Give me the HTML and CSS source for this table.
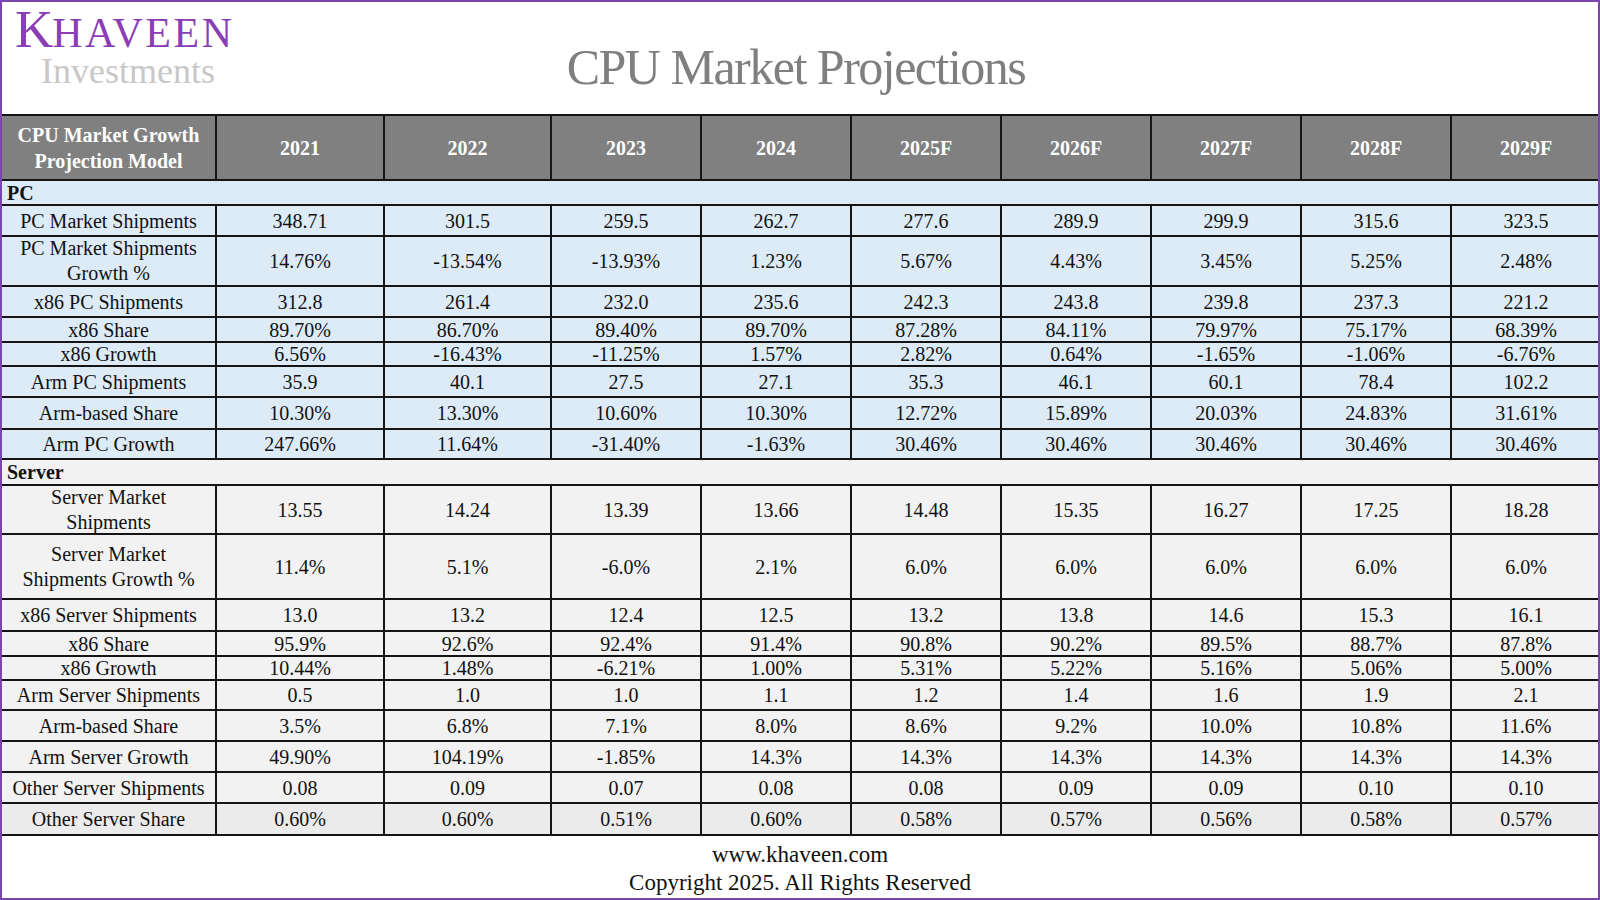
FILE: index.html
```html
<!DOCTYPE html>
<html lang="en">
<head>
<meta charset="utf-8">
<title>CPU Market Projections</title>
<link rel="stylesheet" href="styles.css">
</head>
<body>
<div class="page">
  <header class="top">
    <div class="logo">
      <div class="logo-name"><span class="logo-k">K</span>HAVEEN</div>
      <div class="logo-sub">Investments</div>
    </div>
    <h1 class="title">CPU Market Projections</h1>
    <div class="spacer"></div>
  </header>

  <table class="grid">
    <colgroup>
      <col class="c-label"><col class="c-168"><col class="c-167"><col class="c-150"><col class="c-150"><col class="c-150"><col class="c-150"><col class="c-150"><col class="c-150"><col class="c-150">
    </colgroup>
    <thead>
      <tr class="r65">
        <th class="head-label">CPU Market Growth<br>Projection Model</th>
        <th>2021</th><th>2022</th><th>2023</th><th>2024</th><th>2025F</th><th>2026F</th><th>2027F</th><th>2028F</th><th>2029F</th>
      </tr>
    </thead>
    <tbody class="pc">
      <tr class="r25 section"><td colspan="10">PC</td></tr>
      <tr class="r31"><td class="label">PC Market Shipments</td><td>348.71</td><td>301.5</td><td>259.5</td><td>262.7</td><td>277.6</td><td>289.9</td><td>299.9</td><td>315.6</td><td>323.5</td></tr>
      <tr class="r50"><td class="label"><div class="lines">PC Market Shipments<br>Growth %</div></td><td>14.76%</td><td>-13.54%</td><td>-13.93%</td><td>1.23%</td><td>5.67%</td><td>4.43%</td><td>3.45%</td><td>5.25%</td><td>2.48%</td></tr>
      <tr class="r31"><td class="label">x86 PC Shipments</td><td>312.8</td><td>261.4</td><td>232.0</td><td>235.6</td><td>242.3</td><td>243.8</td><td>239.8</td><td>237.3</td><td>221.2</td></tr>
      <tr class="r25"><td class="label">x86 Share</td><td>89.70%</td><td>86.70%</td><td>89.40%</td><td>89.70%</td><td>87.28%</td><td>84.11%</td><td>79.97%</td><td>75.17%</td><td>68.39%</td></tr>
      <tr class="r24"><td class="label">x86 Growth</td><td>6.56%</td><td>-16.43%</td><td>-11.25%</td><td>1.57%</td><td>2.82%</td><td>0.64%</td><td>-1.65%</td><td>-1.06%</td><td>-6.76%</td></tr>
      <tr class="r31"><td class="label">Arm PC Shipments</td><td>35.9</td><td>40.1</td><td>27.5</td><td>27.1</td><td>35.3</td><td>46.1</td><td>60.1</td><td>78.4</td><td>102.2</td></tr>
      <tr class="r32"><td class="label">Arm-based Share</td><td>10.30%</td><td>13.30%</td><td>10.60%</td><td>10.30%</td><td>12.72%</td><td>15.89%</td><td>20.03%</td><td>24.83%</td><td>31.61%</td></tr>
      <tr class="r30"><td class="label">Arm PC Growth</td><td>247.66%</td><td>11.64%</td><td>-31.40%</td><td>-1.63%</td><td>30.46%</td><td>30.46%</td><td>30.46%</td><td>30.46%</td><td>30.46%</td></tr>
    </tbody>
    <tbody class="server">
      <tr class="r26 section"><td colspan="10">Server</td></tr>
      <tr class="r49"><td class="label"><div class="lines">Server Market<br>Shipments</div></td><td>13.55</td><td>14.24</td><td>13.39</td><td>13.66</td><td>14.48</td><td>15.35</td><td>16.27</td><td>17.25</td><td>18.28</td></tr>
      <tr class="r65"><td class="label"><div class="lines">Server Market<br>Shipments Growth %</div></td><td>11.4%</td><td>5.1%</td><td>-6.0%</td><td>2.1%</td><td>6.0%</td><td>6.0%</td><td>6.0%</td><td>6.0%</td><td>6.0%</td></tr>
      <tr class="r32"><td class="label">x86 Server Shipments</td><td>13.0</td><td>13.2</td><td>12.4</td><td>12.5</td><td>13.2</td><td>13.8</td><td>14.6</td><td>15.3</td><td>16.1</td></tr>
      <tr class="r25"><td class="label">x86 Share</td><td>95.9%</td><td>92.6%</td><td>92.4%</td><td>91.4%</td><td>90.8%</td><td>90.2%</td><td>89.5%</td><td>88.7%</td><td>87.8%</td></tr>
      <tr class="r24"><td class="label">x86 Growth</td><td>10.44%</td><td>1.48%</td><td>-6.21%</td><td>1.00%</td><td>5.31%</td><td>5.22%</td><td>5.16%</td><td>5.06%</td><td>5.00%</td></tr>
      <tr class="r30"><td class="label">Arm Server Shipments</td><td>0.5</td><td>1.0</td><td>1.0</td><td>1.1</td><td>1.2</td><td>1.4</td><td>1.6</td><td>1.9</td><td>2.1</td></tr>
      <tr class="r31"><td class="label">Arm-based Share</td><td>3.5%</td><td>6.8%</td><td>7.1%</td><td>8.0%</td><td>8.6%</td><td>9.2%</td><td>10.0%</td><td>10.8%</td><td>11.6%</td></tr>
      <tr class="r31"><td class="label">Arm Server Growth</td><td>49.90%</td><td>104.19%</td><td>-1.85%</td><td>14.3%</td><td>14.3%</td><td>14.3%</td><td>14.3%</td><td>14.3%</td><td>14.3%</td></tr>
      <tr class="r31"><td class="label">Other Server Shipments</td><td>0.08</td><td>0.09</td><td>0.07</td><td>0.08</td><td>0.08</td><td>0.09</td><td>0.09</td><td>0.10</td><td>0.10</td></tr>
      <tr class="r32 last"><td class="label">Other Server Share</td><td>0.60%</td><td>0.60%</td><td>0.51%</td><td>0.60%</td><td>0.58%</td><td>0.57%</td><td>0.56%</td><td>0.58%</td><td>0.57%</td></tr>
    </tbody>
  </table>

  <footer class="foot">
    <div>www.khaveen.com</div>
    <div>Copyright 2025. All Rights Reserved</div>
  </footer>
</div>
</body>
</html>
```

FILE: styles.css
```css
html, body {
  margin: 0;
  padding: 0;
  background: #ffffff;
}

.page {
  box-sizing: border-box;
  width: 1600px;
  height: 900px;
  border: 2px solid #7a45ad;
  overflow: hidden;
  font-family: "Liberation Serif", "Times New Roman", serif;
  color: #111111;
}

.top {
  height: 112px;
  display: grid;
  grid-template-columns: 1fr auto 1fr;
  align-items: start;
}

.logo {
  padding-left: 13px;
  color: #8b3db6;
}

.logo-name {
  margin-top: 7px;
  height: 44px;
  line-height: 44px;
  font-size: 42px;
  letter-spacing: 2.5px;
  white-space: nowrap;
}

.logo-k {
  font-size: 53px;
  line-height: 40px;
  letter-spacing: -1px;
}

.logo-sub {
  margin-top: 3px;
  padding-left: 26px;
  font-size: 36px;
  line-height: 30px;
  height: 30px;
  color: #c8c8c8;
  white-space: nowrap;
}

.title {
  margin: 40px 0 0;
  padding-right: 8px;
  font-size: 50px;
  line-height: 50px;
  font-weight: normal;
  letter-spacing: -1.5px;
  color: #7f7f7f;
  white-space: nowrap;
}

.grid {
  width: 1600px;
  margin: 0 -2px;
  border-collapse: collapse;
  table-layout: fixed;
  font-size: 20px;
}

.c-label { width: 215px; }
.c-168 { width: 168px; }
.c-167 { width: 167px; }
.c-150 { width: 150px; }

.grid th,
.grid td {
  border: 2px solid #151515;
  padding: 0 3px;
  text-align: center;
  vertical-align: middle;
  white-space: nowrap;
  line-height: 20px;
}

.grid th {
  background: #808080;
  color: #ffffff;
  font-weight: bold;
}

.grid .head-label {
  line-height: 26px;
}

.lines {
  display: flex;
  flex-direction: column;
  justify-content: center;
  height: 40px;
  line-height: 25px;
}

.pc td {
  background: #ddebf7;
}

.server td {
  background: #f2f2f2;
}

.server .last td {
  background: #ebebeb;
}

.grid .section td {
  text-align: left;
  font-weight: bold;
  padding-left: 5px;
}

.r24 { height: 24px; }
.r25 { height: 25px; }
.r26 { height: 26px; }
.r30 { height: 30px; }
.r31 { height: 31px; }
.r32 { height: 32px; }
.r49 { height: 49px; }
.r50 { height: 50px; }
.r65 { height: 65px; }

.foot {
  margin-top: 5px;
  text-align: center;
  font-size: 23px;
  line-height: 28px;
  color: #111111;
}
```
